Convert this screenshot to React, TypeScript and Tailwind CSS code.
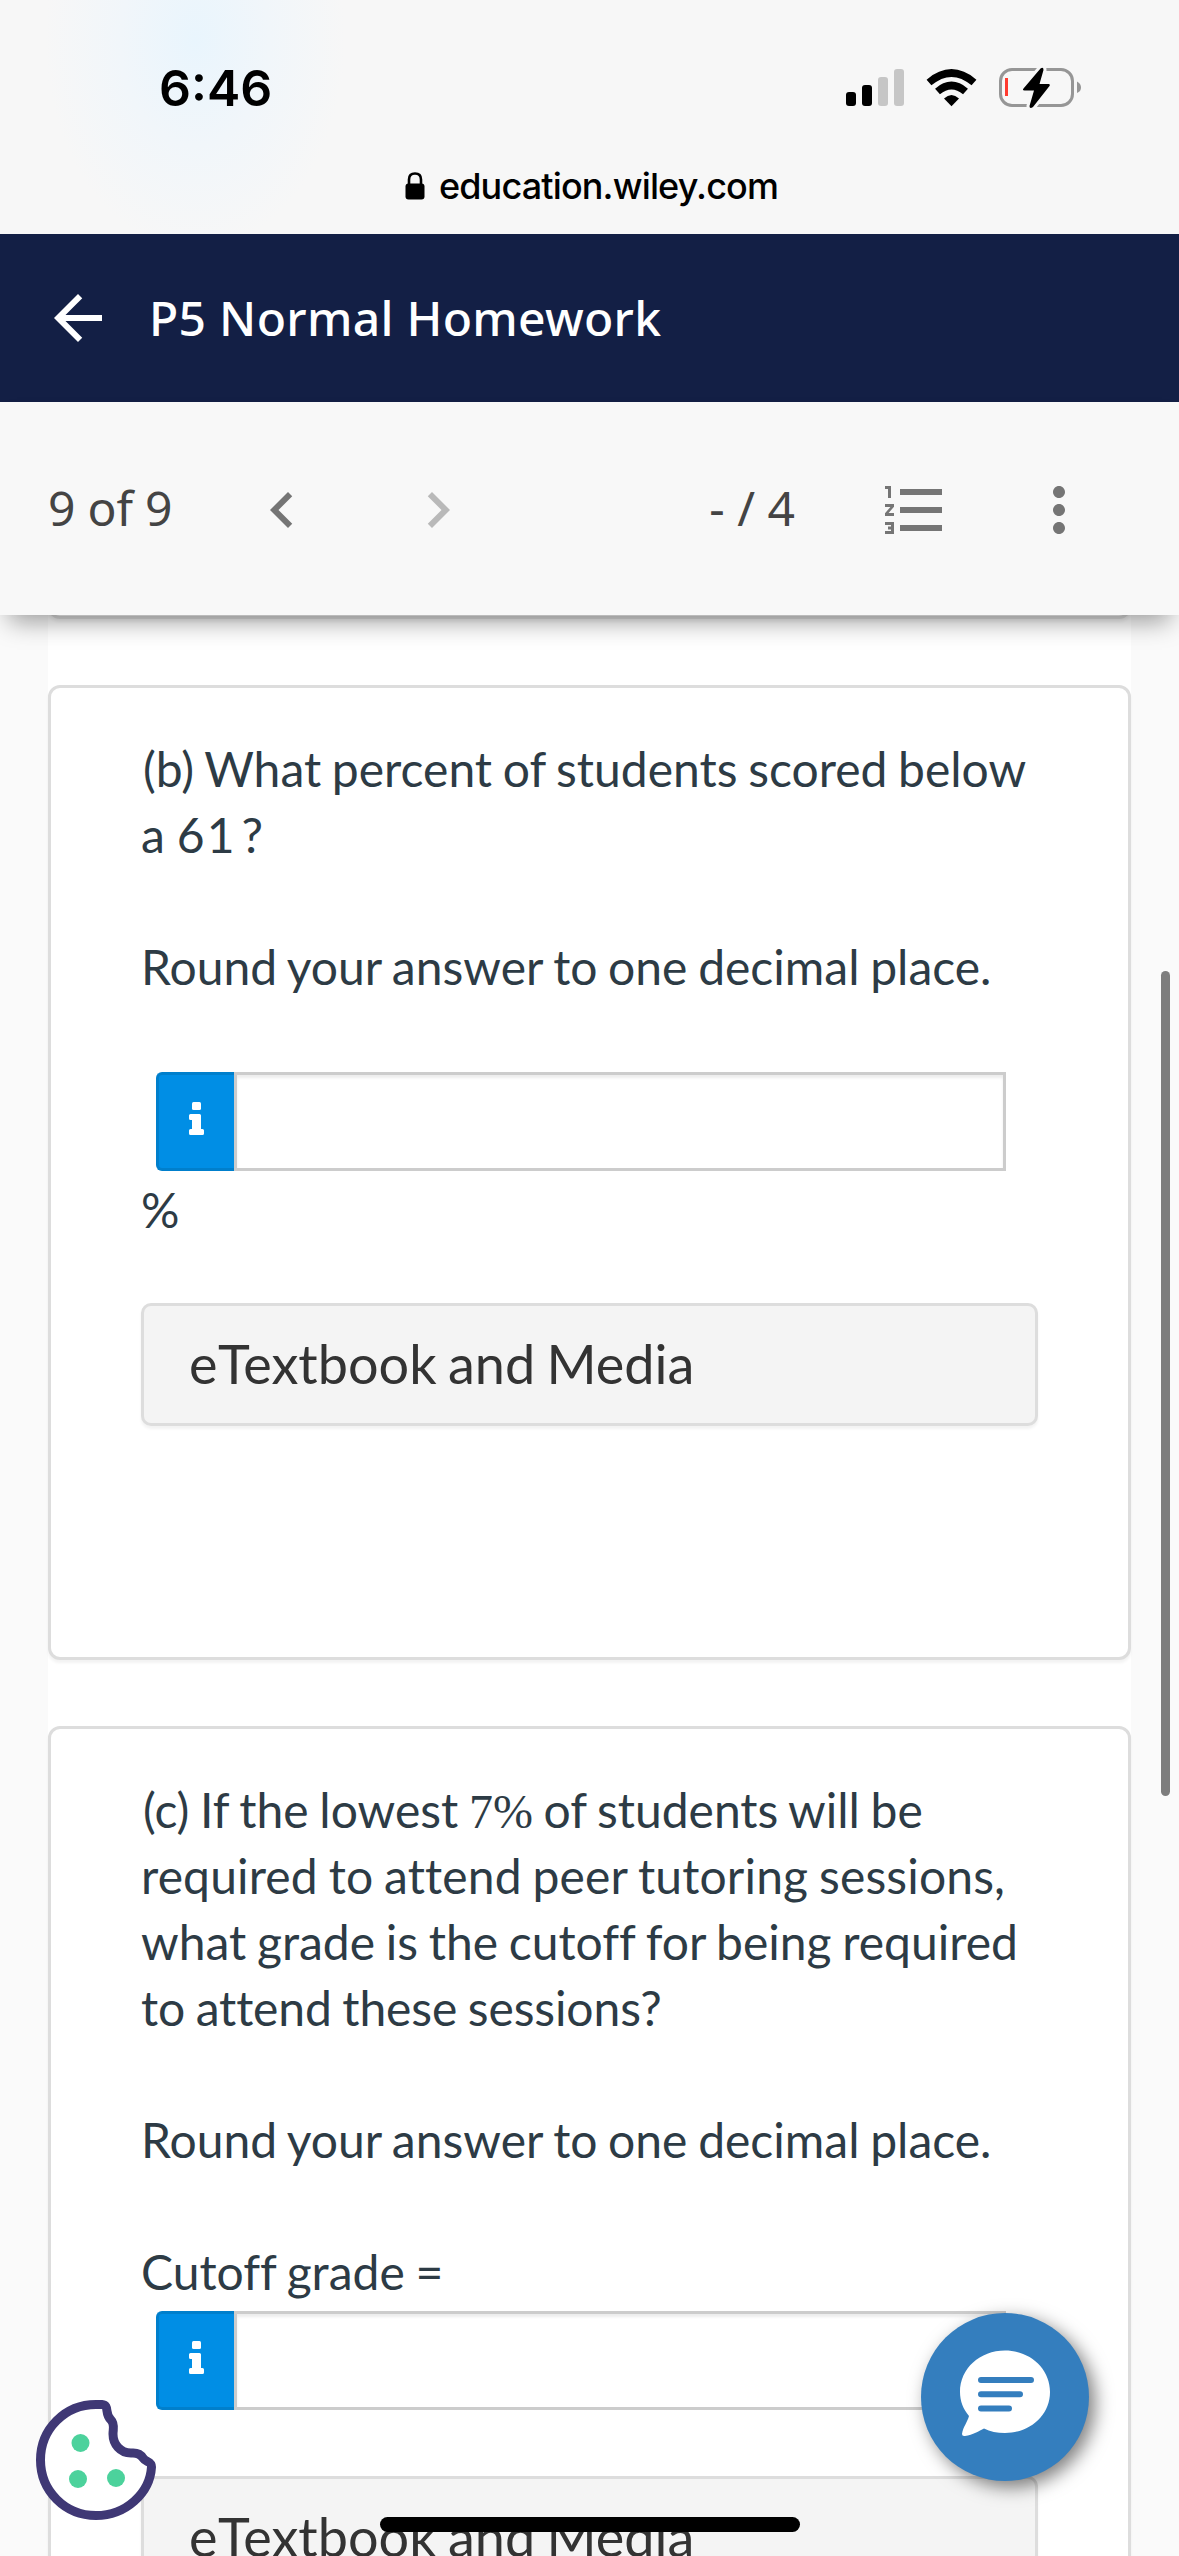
import { ReactNode, useState } from "react";

const StatusIcons = () => (
  <svg width="236" height="42" viewBox="0 0 236 42" fill="none">
    <rect x="0" y="25" width="10" height="14" rx="3" fill="#000" />
    <rect x="16" y="18" width="10" height="21" rx="3" fill="#000" />
    <rect x="32" y="10" width="10" height="29" rx="3" fill="#c6c6c6" />
    <rect x="48" y="2" width="10" height="37" rx="3" fill="#c6c6c6" />
    <path d="M83 15.500Q105.500-3.500 128 15.500" stroke="#000" strokeWidth="7.500" />
    <path d="M91.500 24.500Q105.500 12.500 119.500 24.500" stroke="#000" strokeWidth="7.500" />
    <path d="M98 31.500Q105.500 24.500 113 31.500L105.500 39.200Z" fill="#000" />
    <rect x="154.500" y="2.500" width="72" height="36" rx="11.500" stroke="#969696" strokeWidth="3" />
    <path d="M231 14.500Q235 16.500 235 20.500T231 26Z" fill="#969696" />
    <rect x="159" y="11" width="3" height="18" fill="#ff3b30" />
    <path
      d="M194.500 1.500L177.500 21.500Q176 23.500 178.500 23.500H188L183.500 39Q183.500 42.500 187 40L203.500 19Q204.500 17 202.500 17H193.500L197.500 3Q197.500-0.500 194.500 1.500Z"
      fill="#000"
      stroke="#f7f7f7"
      strokeWidth="6"
      paintOrder="stroke"
    />
  </svg>
);

const Icon = ({ d, className }: { d: string; className: string }) => (
  <svg viewBox="0 0 24 24" fill="currentColor" className={`size-[72px] shrink-0 ${className}`}>
    <path d={d} />
  </svg>
);

const CookieIcon = () => (
  <svg width="120" height="120" viewBox="0 0 120 120">
    <path
      d="M60 4.500C29 4.500 4.500 29 4.500 60S29 115.500 60 115.500C90 115.500 114 93 115.500 67C115.500 61 110 62.500 107 58C104 53 100 52.500 95 53C84 53 77 44 77 34C77 29 79 24 75 20C68 14 74 5 66 4.500Z"
      fill="#fff"
      stroke="#3f3875"
      strokeWidth="9"
      strokeLinejoin="round"
    />
    <circle cx="44.500" cy="43" r="9" fill="#4cd29c" />
    <circle cx="42" cy="79" r="9" fill="#4cd29c" />
    <circle cx="80" cy="78" r="9" fill="#4cd29c" />
  </svg>
);

const ChatIcon = () => (
  <svg width="168" height="168" viewBox="0 0 168 168">
    <path
      d="M84 37.500C59 37.500 39 55.500 39 79C39 88 42 96 48 103C46.500 109 42 114 41 121Q41 123.500 44 123C52 122 58 118 63 115.500C69 118.500 76 120 84 120C109 120 129 102.500 129 79S109 37.500 84 37.500Z"
      fill="#fff"
    />
    <path d="M60 67H110M60 81.300H99M60 95.600H88" stroke="#347ebe" strokeWidth="6" strokeLinecap="round" />
  </svg>
);

function AnswerInput() {
  const [value, setValue] = useState("");
  return (
    <div className="ml-[15px] flex h-[99px] w-[850px]">
      <button className="flex w-[78px] items-center justify-center rounded-l-[6px] border-[3px] border-r-0 border-[#007fcc] bg-[#008ee5]">
        <svg width="15" height="33" viewBox="0 0 15 33" fill="#fff" className="mb-[6px]">
          <rect x="3" y="0" width="9" height="8" rx="1.500" />
          <path d="M1.500 12H10.500Q12 12 12 13.500V27H13.500Q15 27 15 28.500V31.500Q15 33 13.500 33H1.500Q0 33 0 31.500V28.500Q0 27 1.500 27H3V18H1.500Q0 18 0 16.500V13.500Q0 12 1.500 12Z" />
        </svg>
      </button>
      <input
        type="text"
        aria-label="answer"
        value={value}
        onChange={(e) => setValue(e.target.value)}
        className="w-[772px] border-[3px] border-[#ccc] bg-white px-6 shadow-[inset_0_3px_3px_rgba(0,0,0,0.075)] outline-none"
      />
    </div>
  );
}

const MediaButton = () => (
  <button className="flex h-[123px] w-[897px] items-center rounded-[10px] border-[3px] border-[#ddd] bg-[#f4f4f4] pb-[2px] pl-[45px] text-left text-[54px] leading-[66px] text-[#333] shadow-[0_3px_3px_rgba(0,0,0,0.05)] [word-spacing:-2.5px]">
    <span>
      <span className="mr-[0.5px]">e</span>Textbook and Media
    </span>
  </button>
);

const Card = ({ children, className }: { children: ReactNode; className: string }) => (
  <div
    className={`w-[1083px] shrink-0 rounded-[12px] border-[3px] border-[#ddd] bg-white px-[90px] pt-[48px] shadow-[0_3px_3px_rgba(0,0,0,0.05)] ${className}`}
  >
    {children}
  </div>
);

export default function App() {
  return (
    <div className="relative flex h-[2556px] w-[1179px] flex-col overflow-hidden bg-[#fafafa]">
      {/* status bar and address */}
      <header className="h-[234px] shrink-0 bg-[#f7f7f7] bg-[radial-gradient(ellipse_150px_210px_at_195px_40px,#e9f5fd_0%,#f1f6fa_50%,#f7f7f7_100%)] font-['Inter',sans-serif] text-black">
        <div className="flex h-[146px] items-start justify-between pt-[58px] pr-[97px] pl-[159px]">
          <div className="text-[50px] leading-[60px] font-semibold">6:46</div>
          <div className="mt-[9px]">
            <StatusIcons />
          </div>
        </div>
        <div className="flex h-[80px] items-center justify-center gap-[14px] pl-[4px]">
          <svg width="20" height="28" viewBox="0 0 20 28">
            <rect x="0.500" y="11.500" width="19" height="16" rx="3" fill="#000" />
            <path d="M4 13V7.500Q4 1.500 10 1.500T16 7.500V13" fill="none" stroke="#000" strokeWidth="2.600" />
          </svg>
          <div className="text-[36px] leading-[44px] font-medium tracking-[-0.85px]">education.wiley.com</div>
        </div>
      </header>

      <div className="flex h-[168px] shrink-0 items-center bg-[#131f45] pl-[42px] font-['Noto_Sans',sans-serif] text-white">
        <Icon d="M20 11H7.830l5.590-5.590L12 4l-8 8 8 8 1.410-1.410L7.830 13H20v-2z" className="text-white" />
        <h1 className="ml-[35px] text-[48px] font-medium tracking-[0.3px]">P5 Normal Homework</h1>
      </div>

      <div className="relative z-10 flex h-[213px] shrink-0 items-center bg-[#f8f8f8] pt-[2px] pr-[84px] pl-[48px] font-['Noto_Sans',sans-serif] text-[48px] text-[#444] shadow-[0_15px_24px_-9px_rgba(0,0,0,0.4)]">
        <span className="mb-[3px] w-[198px] tracking-[-0.2px]">9 of 9</span>
        <Icon d="M15.410 7.410L14 6l-6 6 6 6 1.410-1.410L10.830 12z" className="text-[#757575]" />
        <Icon d="M10 6L8.590 7.410 13.170 12l-4.580 4.590L10 18l6-6z" className="ml-[84px] text-[#b9b9b9]" />
        <span className="mb-[3px] ml-auto">- / 4</span>
        <Icon
          d="M2 17h2v.5H3v1h1v.5H2v1h3v-4H2v1zm1-9h1V4H2v1h1v3zm-1 3h1.800L2 13.100v.9h3v-1H3.200L5 10.900V10H2v1zm5-6v2h14V5H7zm0 14h14v-2H7v2zm0-6h14v-2H7v2z"
          className="ml-[84px] text-[#757575]"
        />
        <Icon
          d="M12 8c1.100 0 2-.9 2-2s-.9-2-2-2-2 .9-2 2 .9 2 2 2zm0 2c-1.100 0-2 .9-2 2s.9 2 2 2 2-.9 2-2-.9-2-2-2zm0 6c-1.100 0-2 .9-2 2s.9 2 2 2 2-.9 2-2-.9-2-2-2z"
          className="ml-[72px] text-[#757575]"
        />
      </div>

      <main className="ml-[48px] flex h-[1941px] w-[1083px] flex-col gap-[66px] bg-white font-['Lato',sans-serif] text-[48px] leading-[66px] text-[#2d3b45] [font-variant-ligatures:none] [word-spacing:-1.6px]">
        {/* bottom edge of part (a), scrolled under the toolbar */}
        <Card className="-mt-[56px] h-[60px]">{null}</Card>

        <Card className="h-[975px]">
          <p>
            <span className="ml-[2px]">(b) What percent of students scored below</span>
            <br />
            a<span className="mr-[5px] ml-[12px] tracking-[2px]">61</span>?
          </p>
          <p className="mt-[66px] mb-[72px]">Round your answer to one decimal place.</p>
          <AnswerInput />
          <p className="mt-[6px] mb-[60px]">%</p>
          <MediaButton />
        </Card>

        <Card className="h-[1100px]">
          <p>
            <span className="ml-[2px]">
              (c) If the lowest <span className="font-['Liberation_Serif',serif] leading-none">7%</span> of students will be
            </span>
            <br />
            <span className="tracking-[0.14px]">required to attend peer tutoring sessions,</span>
            <br />
            what grade is the cutoff for being required
            <br />
            <span className="tracking-[-0.12px]">to attend these sessions?</span>
          </p>
          <p className="mt-[66px]">Round your answer to one decimal place.</p>
          <p className="mt-[66px] mb-[6px]">Cutoff grade =</p>
          <AnswerInput />
          <div className="mt-[66px]">
            <MediaButton />
          </div>
        </Card>
      </main>

      {/* floating things */}
      <div className="absolute top-[971px] right-[9px] z-20 h-[825px] w-[9px] rounded-full bg-[#7d7d7d]" />
      <button aria-label="cookies" className="absolute top-[2400px] left-[36px] z-20">
        <CookieIcon />
      </button>
      <button
        aria-label="chat"
        className="absolute top-[2313px] left-[921px] z-20 rounded-full bg-[#347ebe] shadow-[6px_6px_18px_rgba(0,0,0,0.5)]"
      >
        <ChatIcon />
      </button>
      <div className="absolute top-[2517px] left-[380px] z-30 h-[15px] w-[420px] rounded-full bg-black" />
    </div>
  );
}
